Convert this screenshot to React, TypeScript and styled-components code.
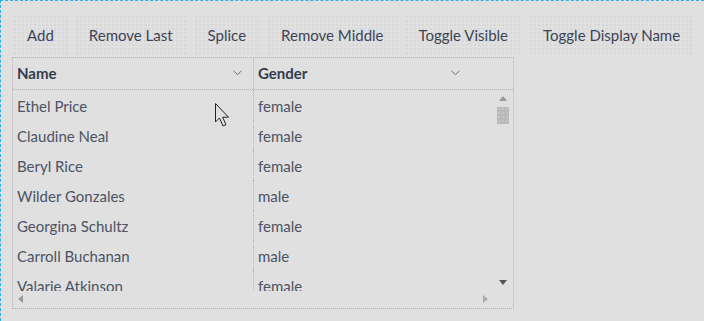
import React from "react";
import styled, { createGlobalStyle } from "styled-components";

const GlobalStyle = createGlobalStyle`
  html, body { margin: 0; padding: 0; background: #e0e0e0; overflow: hidden; }
  body { font-family: Lato, "Open Sans", sans-serif; }
`;

const Frame = styled.div`
  position: relative;
  width: 100%;
  height: 100vh;
  box-sizing: border-box;
  border-top: 1px dashed #2aafe6;
  border-left: 1px dashed #2aafe6;
  padding: 13px 0 0 11px;
  overflow: hidden;
`;

const dots = `
  background-color: #e0e0e0;
  background-image: radial-gradient(circle, #cecece 0.6px, transparent 0.8px);
  background-size: 4px 4px;
  background-position: 1px 1px;
`;

const Toolbar = styled.div`
  display: flex;
  gap: 6px;
  height: 43px;
`;

const Button = styled.button`
  ${dots}
  border: none;
  height: 42px;
  padding: 0 14px 0 15px;
  margin: 0;
  font-family: Lato, sans-serif;
  font-size: 15px;
  color: #3c4457;
  cursor: pointer;
`;

const Grid = styled.div`
  position: relative;
  width: 502px;
  height: 252px;
  box-sizing: border-box;
  border: 1px dotted #b5b5b5;
  display: flex;
  flex-direction: column;
`;

const HeaderRow = styled.div`
  display: flex;
  height: 32px;
  box-sizing: border-box;
  border-bottom: 1px dotted #b5b5b5;
`;

const HeaderCell = styled.div<{ $w: number; $divider?: boolean }>`
  width: ${(p) => p.$w}px;
  box-sizing: border-box;
  display: flex;
  align-items: center;
  justify-content: space-between;
  padding: 0 11px 1px 4px;
  font-size: 15px;
  font-weight: 700;
  color: #333c4e;
  border-right: ${(p) => (p.$divider ? "1px dotted #b5b5b5" : "none")};
`;

const Body = styled.div`
  display: flex;
  height: 201px;
`;

const Viewport = styled.div`
  width: 483px;
  overflow: hidden;
`;

const Row = styled.div`
  display: flex;
  height: 30px;
`;

const Cell = styled.div<{ $w: number; $divider?: boolean }>`
  width: ${(p) => p.$w}px;
  box-sizing: border-box;
  display: flex;
  align-items: center;
  padding: 1px 4px 0 4px;
  font-size: 15px;
  color: #4b5364;
  border-right: ${(p) => (p.$divider ? "1px dotted #b5b5b5" : "none")};
`;

const VScroll = styled.div`
  width: 17px;
  position: relative;
`;

const Thumb = styled.div`
  position: absolute;
  left: 1px;
  top: 17px;
  width: 12px;
  height: 17px;
  background-color: #b9b9b9;
  background-image: radial-gradient(circle, #d2d2d2 0.6px, transparent 0.8px);
  background-size: 4px 4px;
`;

const ArrowSlot = styled.div<{ $top: number }>`
  position: absolute;
  top: ${(p) => p.$top}px;
  left: 3px;
  line-height: 0;
`;

const HScroll = styled.div`
  height: 16px;
  width: 483px;
  display: flex;
  align-items: center;
  justify-content: space-between;
  padding: 0 8px 0 5px;
  box-sizing: border-box;
`;

const Cursor = styled.svg`
  position: absolute;
  left: 213px;
  top: 101px;
`;

const Chevron = () => (
  <svg width="9" height="6" viewBox="0 0 9 6">
    <polyline points="0.5,0.8 4.5,4.6 8.5,0.8" fill="none" stroke="#646c7e" strokeWidth="1" />
  </svg>
);

const Tri = ({ dir, color }: { dir: "up" | "down" | "left" | "right"; color: string }) => {
  const pts = {
    up: "0,5 4,0 8,5",
    down: "0,0 8,0 4,5",
    left: "5,0 5,8 0,4",
    right: "0,0 0,8 5,4",
  }[dir];
  const w = dir === "up" || dir === "down" ? 8 : 5;
  const h = dir === "up" || dir === "down" ? 5 : 8;
  return (
    <svg width={w} height={h} viewBox={`0 0 ${w} ${h}`}>
      <polygon points={pts} fill={color} />
    </svg>
  );
};

const people = [
  ["Ethel Price", "female"],
  ["Claudine Neal", "female"],
  ["Beryl Rice", "female"],
  ["Wilder Gonzales", "male"],
  ["Georgina Schultz", "female"],
  ["Carroll Buchanan", "male"],
  ["Valarie Atkinson", "female"],
];

const buttons = ["Add", "Remove Last", "Splice", "Remove Middle", "Toggle Visible", "Toggle Display Name"];

export default function App() {
  return (
    <>
      <GlobalStyle />
      <Frame>
        <Toolbar>
          {buttons.map((b) => (
            <Button key={b}>{b}</Button>
          ))}
        </Toolbar>
        <Grid>
          <HeaderRow>
            <HeaderCell $w={241} $divider>
              Name <Chevron />
            </HeaderCell>
            <HeaderCell $w={217}>
              Gender <Chevron />
            </HeaderCell>
          </HeaderRow>
          <Body>
            <Viewport>
              {people.map(([n, g]) => (
                <Row key={n}>
                  <Cell $w={241} $divider>{n}</Cell>
                  <Cell $w={242}>{g}</Cell>
                </Row>
              ))}
            </Viewport>
            <VScroll>
              <ArrowSlot $top={5}>
                <Tri dir="up" color="#9a9a9a" />
              </ArrowSlot>
              <Thumb />
              <ArrowSlot $top={189}>
                <Tri dir="down" color="#555555" />
              </ArrowSlot>
            </VScroll>
          </Body>
          <HScroll>
            <Tri dir="left" color="#9a9a9a" />
            <Tri dir="right" color="#aaaaaa" />
          </HScroll>
        </Grid>
        <Cursor width="17" height="27" viewBox="0 0 17 27">
          <path
            d="M1.5 1.5 L1.5 20 L5.5 16 L9 24 L12 22.7 L8.6 15.2 L14.5 15.2 Z"
            fill="#e0e0e0"
            stroke="#222"
            strokeWidth="1"
            strokeLinejoin="miter"
          />
        </Cursor>
      </Frame>
    </>
  );
}
